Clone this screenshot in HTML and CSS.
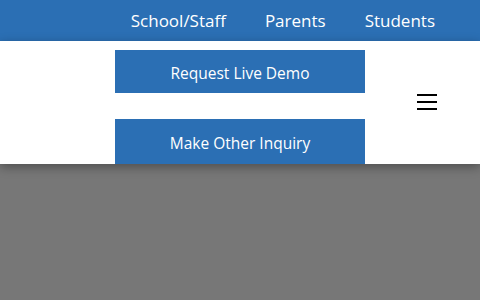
FILE: index.html
```html
<!DOCTYPE html>
<html lang="en">
<head>
  <meta charset="UTF-8">
  <title>Menu</title>
  <meta name="viewport" content="width=device-width, initial-scale=1.0">
  <link rel="stylesheet" href="styles.css">
</head>
<body>
  <!-- TOP BAR -->
  <div class="topbar">
    <a href="#">School/Staff</a>
    <a href="#">Parents</a>
    <a href="#">Students</a>
  </div>

  <!-- MENU PANEL -->
  <div class="panel">
    <div class="actions">
      <a class="btn" href="#">Request Live Demo</a>
      <a class="btn tall" href="#">Make Other Inquiry</a>
    </div>
    <div class="burger">
      <span></span>
      <span></span>
      <span></span>
    </div>
  </div>

  <div class="backdrop"></div>
</body>
</html>
```

FILE: styles.css
```css
* {
  margin: 0;
  padding: 0;
  box-sizing: border-box;
}

body {
  font-family: 'Open Sans', 'Noto Sans', sans-serif;
  background: #777;
  height: 100vh;
  display: flex;
  flex-direction: column;
  overflow: hidden;
}

/* TOP BAR */
.topbar {
  height: 41px;
  background: #2b6fb4;
  display: flex;
  justify-content: flex-end;
  align-items: center;
  gap: 39px;
  padding-right: 45px;
}

.topbar a {
  color: #fff;
  text-decoration: none;
  font-size: 17px;
}

/* PANEL */
.panel {
  height: 123px;
  background: #fff;
  display: grid;
  grid-template-columns: 1fr 250px 1fr;
  overflow: hidden;
  position: relative;
  z-index: 2;
  box-shadow: 0 3px 10px rgba(0, 0, 0, 0.35);
}

.actions {
  grid-column: 2;
  display: flex;
  flex-direction: column;
  gap: 26px;
  padding-top: 9px;
}

.btn {
  height: 43px;
  background: #2b6fb4;
  color: #fff;
  text-decoration: none;
  font-size: 15.5px;
  display: flex;
  justify-content: center;
  align-items: center;
  padding-top: 3px;
}

.btn.tall {
  height: 49px;
  padding-top: 0;
  padding-bottom: 2px;
}

.burger {
  grid-column: 3;
  justify-self: end;
  align-self: center;
  margin-right: 43px;
  margin-bottom: 6px;
  width: 20px;
  display: flex;
  flex-direction: column;
  gap: 5px;
}

.burger span {
  height: 2px;
  background: #000;
}

.backdrop {
  flex-grow: 1;
  background: #777;
}
```
